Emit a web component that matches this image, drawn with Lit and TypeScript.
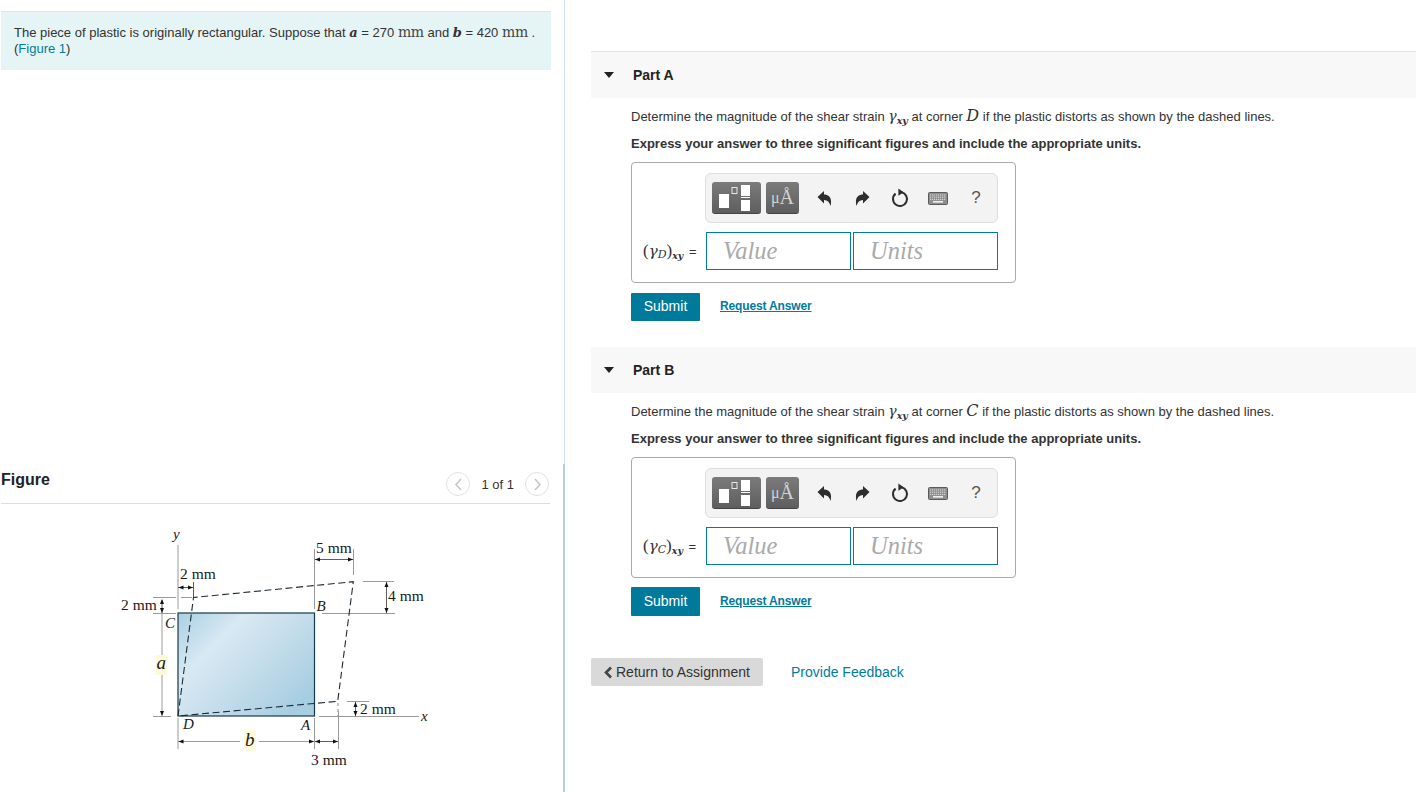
import { LitElement, html, css, svg } from "lit";
import { customElement } from "lit/decorators.js";

function arrowH(x: number, y: number, dir: number) {
  return svg`<path d="M${x} ${y} l${-dir * 5} -2 v4 z" fill="#111"/>`;
}
function arrowV(x: number, y: number, dir: number) {
  return svg`<path d="M${x} ${y} l-2 ${-dir * 5} h4 z" fill="#111"/>`;
}

const figure = svg`
<svg class="figsvg" viewBox="0 504 550 288" width="550" height="288" xmlns="http://www.w3.org/2000/svg">
  <defs>
    <linearGradient id="plate" x1="0" y1="0" x2="1" y2="0.75">
      <stop offset="0" stop-color="#a9d0e3"/>
      <stop offset="0.32" stop-color="#d8e9f3"/>
      <stop offset="0.55" stop-color="#c9e0ed"/>
      <stop offset="1" stop-color="#a6cde1"/>
    </linearGradient>
  </defs>
  <rect x="178" y="613" width="136.5" height="103" fill="url(#plate)" stroke="#173a4a" stroke-width="1.2"/>
  <g stroke="#9a9a9a" stroke-width="1" fill="none">
    <path d="M178 545V609"/>
    <path d="M153 597.5H176M181 597.5H192"/>
    <path d="M153 613.5H176"/>
    <path d="M162 613V655M162 675V716"/>
    <path d="M153 716.5H171"/>
    <path d="M178 718V749"/>
    <path d="M178 741.5H240M259 741.5H314"/>
    <path d="M314.5 718V749"/>
    <path d="M319 716.5H419"/>
    <path d="M338.5 711V749"/>
    <path d="M322 613.5H395"/>
    <path d="M363 581.5H394"/>
    <path d="M347 701.5H369"/>
    <path d="M314.5 549V609"/>
    <path d="M353.5 549V575"/>
  </g>
  <g stroke="#333" stroke-width="0.8" fill="none">
    <path d="M178 587.5H193"/>
    <path d="M193.5 582V597"/>
    <path d="M162 600V613"/>
    <path d="M315 559.5H353"/>
    <path d="M386.5 582V613"/>
    <path d="M355.5 702V716"/>
    <path d="M315 741.5H338"/>
  </g>
  ${arrowH(178.5, 587.5, -1)}${arrowH(193, 587.5, 1)}
  ${arrowV(162, 599, -1)}${arrowV(162, 613, 1)}${arrowV(162, 716, 1)}
  ${arrowH(315, 559.5, -1)}${arrowH(353, 559.5, 1)}
  ${arrowV(386.5, 582, -1)}${arrowV(386.5, 613, 1)}
  ${arrowV(355.5, 702, -1)}${arrowV(355.5, 716, 1)}
  ${arrowH(178.5, 741.5, -1)}${arrowH(314, 741.5, 1)}${arrowH(315, 741.5, -1)}${arrowH(338, 741.5, 1)}
  <path d="M178 716L193.5 597.5L353.3 581.7L337.7 701.3L178 716" fill="none" stroke="#1d2a33" stroke-width="1.1" stroke-dasharray="7 3.6"/>
  <path d="M338 703V716" fill="none" stroke="#888" stroke-dasharray="3 3"/>
  <rect x="155.5" y="655" width="11.5" height="20" fill="#fdfbdc"/>
  <rect x="244" y="730" width="12" height="21" fill="#fdfbdc"/>
  <g class="ft">
    <text x="180" y="579">2 mm</text>
    <text x="121" y="610">2 mm</text>
    <text x="316" y="553">5 mm</text>
    <text x="388" y="601">4 mm</text>
    <text x="360" y="714">2 mm</text>
    <text x="311" y="765">3 mm</text>
  </g>
  <g class="fi">
    <text x="173" y="539">y</text>
    <text x="165" y="628">C</text>
    <text x="316.5" y="611">B</text>
    <text x="183" y="729">D</text>
    <text x="301" y="730">A</text>
    <text x="421" y="721">x</text>
    <text x="156.5" y="669" class="big">a</text>
    <text x="245" y="746" class="big">b</text>
  </g>
</svg>`;

const templateIcon = svg`
<svg width="49" height="32" viewBox="0 0 49 32">
  <rect x="7" y="12" width="10" height="14" fill="#fff"/>
  <rect x="20" y="5.5" width="5" height="6" fill="none" stroke="#e8e8e8"/>
  <rect x="29" y="3" width="9" height="11" fill="#fff"/>
  <rect x="29" y="15" width="9" height="1" fill="#fff"/>
  <rect x="29" y="18" width="9" height="11" fill="#fff"/>
</svg>`;

const undoIcon = svg`
<svg width="15" height="17" viewBox="0 0 15 17"><path d="M0.5 7L7 1V4.5C12 4.5 15.5 8 13.5 16C12.5 12 10.5 10 7 10V13.5Z" fill="#2d2d2d"/></svg>`;
const redoIcon = svg`
<svg width="15" height="17" viewBox="0 0 15 17"><path d="M14.5 7L8 1V4.5C3 4.5 -0.5 8 1.5 16C2.5 12 4.5 10 8 10V13.5Z" fill="#2d2d2d"/></svg>`;
const resetIcon = svg`
<svg width="18" height="20" viewBox="0 0 18 20"><path d="M10.5 4.2A7 7 0 1 1 4.6 5.6" fill="none" stroke="#2d2d2d" stroke-width="2"/><path d="M7.4 0.6L12.6 4.2L7.4 7.8Z" fill="#2d2d2d"/></svg>`;
const kbdIcon = svg`
<svg width="20" height="13" viewBox="0 0 20 13"><rect x="0.5" y="0.5" width="19" height="12" rx="1" fill="#8f8f8f" stroke="#5a5a5a"/>
<path d="M2 3H18M2 5.2H18M2 7.4H18" stroke="#f0f0f0" stroke-width="0.8" stroke-dasharray="1.2 0.8"/><rect x="5" y="9" width="10" height="1.6" fill="#f0f0f0"/></svg>`;

@customElement("app-root")
export class AppRoot extends LitElement {
  static styles = css`
    :host { display: block; width: 1416px; height: 792px; overflow: hidden; font-family: "Liberation Sans", Arial, sans-serif; color: #333; font-size: 13px; background: #fff; }
    .page { display: flex; height: 792px; }
    .left { width: 565px; flex: none; display: flex; flex-direction: column; }
    .ltop { height: 464px; flex: none; border-right: 1px solid #d3dfe9; width: 565px; padding-top: 11px; box-sizing: border-box; }
    .lbot { flex: 1; border-right: 2px solid #b7cde0; width: 565px; box-sizing: border-box; }
    .intro { margin-left: 1px; width: 550px; height: 59px; box-sizing: border-box; background: #e5f5f6; border-top: 1px solid #dde6e8; padding: 13px 13px 0; line-height: 16px; color: #333; white-space: nowrap; }
    a { color: #007c9e; text-decoration: none; }
    .m { font-family: "DejaVu Serif", serif; font-style: italic; font-weight: 700; font-size: 13px; line-height: 0; }
    .mm { font-family: "DejaVu Serif", serif; font-size: 14px; line-height: 0; color: #444; letter-spacing: -0.3px; }
    .fighead { width: 549px; margin-left: 1px; height: 40px; box-sizing: border-box; border-bottom: 1px solid #ddd; display: flex; align-items: center; }
    .figtitle { font-size: 16px; font-weight: 700; color: #222; flex: 1; margin-top: -7px; }
    .pager { display: flex; align-items: center; gap: 11px; margin-right: 1px; padding-top: 1px; }
    .pg { width: 24px; height: 24px; border: 1px solid #e2e2e2; border-radius: 50%; box-sizing: border-box; display: flex; align-items: center; justify-content: center; }
    .figsvg { display: block; }
    .ft text { font-family: "Liberation Serif", serif; font-size: 15.5px; fill: #1a1a1a; }
    .fi text { font-family: "Liberation Serif", serif; font-style: italic; font-size: 15px; fill: #1a1a1a; }
    .fi text.big { font-size: 19px; }
    .right { flex: 1; padding: 51px 0 0 26px; }
    .parttop { border-top: 1px solid #e2e2e2; }
    .parthead { height: 46px; background: #f8f8f8; display: flex; align-items: center; font-weight: 700; font-size: 14px; color: #222; }
    .tri { width: 0; height: 0; border-left: 5.5px solid transparent; border-right: 5.5px solid transparent; border-top: 6px solid #222; margin: 0 19px 0 13px; }
    .body { padding-left: 40px; }
    .line { height: 20px; line-height: 20px; white-space: nowrap; color: #333; }
    .desc { margin-top: 9px; }
    .express { margin-top: 7px; font-weight: 700; }
    .sym { font-family: "DejaVu Serif", serif; font-style: italic; font-size: 14px; line-height: 0; }
    .sub { font-family: "DejaVu Serif", serif; font-style: italic; font-weight: 700; font-size: 9.5px; vertical-align: -3px; line-height: 0; }
    .cap { font-family: "DejaVu Serif", serif; font-style: italic; font-size: 16px; line-height: 0; }
    .box { margin-top: 8px; width: 385px; height: 121px; box-sizing: border-box; border: 1px solid #aaa; border-radius: 4px; padding: 10px 17px 0 11px; }
    .tb { margin-left: 62px; width: 293px; height: 50px; box-sizing: border-box; background: #f3f3f3; border: 1px solid #ddd; border-radius: 6px; display: flex; align-items: center; padding-left: 6px; }
    .tbtn { height: 32px; border-radius: 3px; background: linear-gradient(#7b7b7b, #5e5e5e); border-bottom: 1px solid #444; box-sizing: border-box; display: flex; align-items: center; justify-content: center; }
    .t1 { width: 49px; margin-right: 5px; }
    .t2 { width: 33px; color: #d2d2d2; font-family: "Liberation Serif", serif; font-size: 20px; }
    .t2 small { font-size: 16px; }
    .ic { width: 38px; flex: none; display: flex; align-items: center; justify-content: center; height: 32px; }
    .ic1 { margin-left: 6px; }
    .q { font-size: 17px; color: #555; }
    .row { display: flex; align-items: center; margin-top: 9px; }
    .lab { width: 63px; flex: none; white-space: nowrap; font-size: 13px; color: #333; }
    .lab .p { font-family: "Liberation Serif", serif; font-size: 17px; line-height: 0; }
    .lab .g { font-family: "DejaVu Serif", serif; font-style: italic; font-size: 15px; line-height: 0; }
    .lab .s { font-size: 11px; font-family: "DejaVu Serif", serif; font-style: italic; vertical-align: -2px; line-height: 0; }
    .lab .sub { margin-right: 2px; }
    .inp { width: 145px; height: 38px; box-sizing: border-box; border: 1px solid #007c9e; padding-left: 16px; font-family: "Liberation Serif", serif; font-style: italic; font-size: 24.5px; color: #aaa; line-height: 36px; }
    .inp + .inp { margin-left: 2px; }
    .acts { display: flex; align-items: center; margin-top: 10px; height: 28px; }
    .submit { width: 69px; height: 28px; background: #007a9b; color: #fff; font-size: 14px; padding-bottom: 2px; box-sizing: border-box; display: flex; align-items: center; justify-content: center; border-radius: 1px; }
    .req { margin-left: 20px; font-weight: 700; font-size: 12px; text-decoration: underline; margin-top: -2px; letter-spacing: -0.15px; }
    .partb { margin-top: 26px; }
    .partb .acts { margin-top: 9px; height: 29px; }
    .partb .submit { height: 29px; padding-bottom: 1px; }
    .foot { display: flex; align-items: center; margin-top: 42px; font-size: 14px; }
    .ret { width: 172px; height: 28px; background: #d9d9d9; border-radius: 2px; display: flex; align-items: center; padding-left: 12px; box-sizing: border-box; gap: 3px; color: #333; }
    .fb { margin-left: 28px; }
  `;

  part(name: string, corner: string, cls: string) {
    return html`
      <section class=${cls}>
        <div class="parthead"><span class="tri"></span>Part ${name}</div>
        <div class="body">
          <div class="line desc">Determine the magnitude of the shear strain <span class="sym">γ</span><span class="sub">xy</span> at corner <span class="cap">${corner}</span> if the plastic distorts as shown by the dashed lines.</div>
          <div class="line express">Express your answer to three significant figures and include the appropriate units.</div>
          <div class="box">
            <div class="tb">
              <div class="tbtn t1">${templateIcon}</div>
              <div class="tbtn t2"><small>μ</small>Å</div>
              <div class="ic ic1">${undoIcon}</div>
              <div class="ic">${redoIcon}</div>
              <div class="ic">${resetIcon}</div>
              <div class="ic">${kbdIcon}</div>
              <div class="ic q">?</div>
            </div>
            <div class="row">
              <div class="lab"><span class="p">(</span><span class="g">γ</span><span class="s">${corner}</span><span class="p">)</span><span class="sub">xy</span> =</div>
              <div class="inp">Value</div>
              <div class="inp">Units</div>
            </div>
          </div>
          <div class="acts">
            <div class="submit">Submit</div>
            <a class="req" href="#">Request Answer</a>
          </div>
        </div>
      </section>`;
  }

  render() {
    return html`
      <div class="page">
        <div class="left">
          <div class="ltop">
            <div class="intro">The piece of plastic is originally rectangular. Suppose that <span class="m">a</span> = 270 <span class="mm">mm</span> and <span class="m">b</span> = 420 <span class="mm">mm</span> .<br />(<a href="#">Figure 1</a>)</div>
          </div>
          <div class="lbot">
            <div class="fighead">
              <div class="figtitle">Figure</div>
              <div class="pager">
                <div class="pg"><svg width="9" height="13" viewBox="0 0 9 13"><path d="M7 1L2 6.5L7 12" fill="none" stroke="#c4c4c4" stroke-width="1.5"/></svg></div>
                <span>1 of 1</span>
                <div class="pg"><svg width="9" height="13" viewBox="0 0 9 13"><path d="M2 1L7 6.5L2 12" fill="none" stroke="#c4c4c4" stroke-width="1.5"/></svg></div>
              </div>
            </div>
            ${figure}
          </div>
        </div>
        <div class="right">
          ${this.part("A", "D", "parttop")}
          ${this.part("B", "C", "partb")}
          <div class="foot">
            <div class="ret"><svg width="10" height="13" viewBox="0 0 10 13"><path d="M8 1.5L3 6.5L8 11.5" fill="none" stroke="#444" stroke-width="2.6"/></svg>Return to Assignment</div>
            <a class="fb" href="#">Provide Feedback</a>
          </div>
        </div>
      </div>
    `;
  }
}
